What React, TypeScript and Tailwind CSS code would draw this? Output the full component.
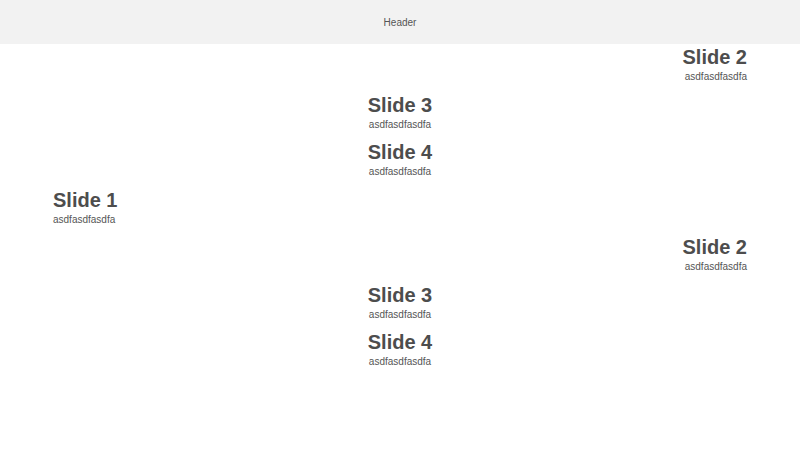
const slides: { title: string; align: 'left' | 'center' | 'right' }[] = [
  { title: 'Slide 2', align: 'right' },
  { title: 'Slide 3', align: 'center' },
  { title: 'Slide 4', align: 'center' },
  { title: 'Slide 1', align: 'left' },
  { title: 'Slide 2', align: 'right' },
  { title: 'Slide 3', align: 'center' },
  { title: 'Slide 4', align: 'center' },
];

const alignClass = {
  left: 'items-start text-left',
  center: 'items-center text-center',
  right: 'items-end text-right',
};

export default function App() {
  return (
    <div className="min-h-screen bg-white text-[#555555]" style={{ fontFamily: '"Liberation Sans", Arial, sans-serif' }}>
      <header className="h-[44px] bg-[#f2f2f2] flex items-center justify-center text-[10px]">
        Header
      </header>
      <div className="flex flex-col px-[53px] pt-[1px]">
        {slides.map((s, i) => (
          <div key={i} className={`flex flex-col pb-[9.5px] ${alignClass[s.align]}`}>
            <h2 className="text-[20px] leading-[25px] font-bold text-[#4d4d4d]">{s.title}</h2>
            <p className="text-[10px] leading-[13px]">asdfasdfasdfa</p>
          </div>
        ))}
      </div>
    </div>
  );
}
